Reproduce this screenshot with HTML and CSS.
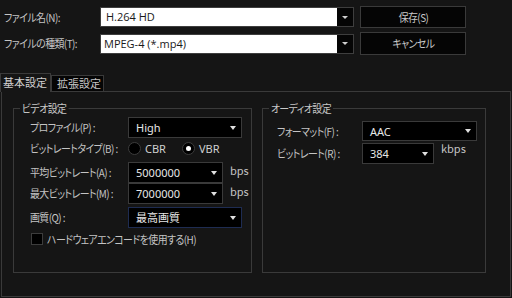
FILE: index.html
```html
<!DOCTYPE html>
<html lang="ja">
<head>
<meta charset="utf-8">
<link rel="stylesheet" href="styles.css">
</head>
<body>
<div class="top">
  <div class="flabel cx">ファイル名(N):</div>
  <div class="combo"><span class="field">H.264 HD</span><span class="cbtn"><span class="arrow small"></span></span></div>
  <div class="btn"><span class="cx mid">保存(S)</span></div>
  <div class="flabel cx">ファイルの種類(T):</div>
  <div class="combo"><span class="field field2">MPEG-4 (*.mp4)</span><span class="cbtn"><span class="arrow small"></span></span></div>
  <div class="btn btn2"><span class="cx mid">キャンセル</span></div>
</div>

<div class="tabs">
  <div class="tab active">基本設定</div>
  <div class="tab">拡張設定</div>
</div>

<div class="panel">
  <div class="group video">
    <div class="gtitle cx">ビデオ設定</div>
    <div class="row r1">
      <div class="lbl cx">プロファイル(P) :</div>
      <div class="dd w114"><span class="val">High</span><span class="arrow"></span></div>
    </div>
    <div class="row r2">
      <div class="lbl cx">ビットレートタイプ(B) :</div>
      <div class="radio"><span class="circle"></span><span class="rtext">CBR</span></div>
      <div class="radio second"><span class="circle on"></span><span class="rtext">VBR</span></div>
    </div>
    <div class="row r3">
      <div class="lbl cx">平均ビットレート(A) :</div>
      <div class="dd w95"><span class="val">5000000</span><span class="arrow"></span></div>
      <div class="unit">bps</div>
    </div>
    <div class="row r4">
      <div class="lbl cx">最大ビットレート(M) :</div>
      <div class="dd w95"><span class="val">7000000</span><span class="arrow"></span></div>
      <div class="unit">bps</div>
    </div>
    <div class="row r5">
      <div class="lbl cx">画質(Q) :</div>
      <div class="dd w114 focus"><span class="val jp">最高画質</span><span class="arrow"></span></div>
    </div>
    <div class="row r6">
      <span class="check"></span><span class="ctext cx">ハードウェアエンコードを使用する(H)</span>
    </div>
  </div>

  <div class="group audio">
    <div class="gtitle cx">オーディオ設定</div>
    <div class="row a1">
      <div class="lbl alb cx">フォーマット(F) :</div>
      <div class="dd w115"><span class="val">AAC</span><span class="arrow"></span></div>
    </div>
    <div class="row a2">
      <div class="lbl alb cx">ビットレート(R) :</div>
      <div class="dd w72"><span class="val">384</span><span class="arrow"></span></div>
      <div class="unit kb">kbps</div>
    </div>
  </div>
</div>
</body>
</html>
```

FILE: styles.css
```css
html, body {
  margin: 0;
  padding: 0;
}
body {
  width: 512px;
  height: 298px;
  overflow: hidden;
  background: #151515;
  color: #c4c4c4;
  font-family: "Noto Sans CJK JP", "Noto Sans", sans-serif;
  font-size: 11px;
  font-feature-settings: "palt";
  line-height: 13px;
}

/* condensed Japanese UI text (Meiryo UI-like narrow kana) */
.cx {
  letter-spacing: -0.6px;
  transform: scaleX(0.9);
  transform-origin: left center;
}
.cx.mid {
  transform-origin: center center;
  display: inline-block;
}

.top {
  display: grid;
  grid-template-columns: 90px 254px 106px;
  grid-template-rows: 22px 23px;
  column-gap: 6px;
  row-gap: 4px;
  padding: 6px 0 0 4px;
  align-items: center;
}
.flabel {
  white-space: nowrap;
}
.combo {
  display: flex;
  height: 20px;
  box-sizing: border-box;
  border: 1px solid #3e3e3e;
}
.field {
  flex: 1;
  background: #ffffff;
  color: #1a1a1a;
  font-family: "Open Sans", "Noto Sans", sans-serif;
  font-size: 11px;
  line-height: 18px;
  padding-left: 5px;
}
.field2 {
  padding-left: 3px;
}
.cbtn {
  width: 16px;
  background: #050505;
  display: flex;
  align-items: center;
  justify-content: center;
}
.btn {
  height: 22px;
  box-sizing: border-box;
  border: 1px solid #3a3a3a;
  background: #050505;
  color: #c8c8c8;
  display: flex;
  align-items: center;
  justify-content: center;
}
.btn2 {
  height: 23px;
}

.arrow {
  width: 0;
  height: 0;
  border-left: 3.5px solid transparent;
  border-right: 3.5px solid transparent;
  border-top: 4px solid #e0e0e0;
}
.arrow.small {
  border-left-width: 3px;
  border-right-width: 3px;
  border-top-width: 3px;
  border-top-color: #cfcfcf;
}

.tabs {
  display: flex;
  align-items: flex-end;
  margin-top: 18px;
  height: 18px;
}
.tab {
  box-sizing: border-box;
  height: 16px;
  border: 1px solid #3a3a3a;
  border-bottom: none;
  background: #050505;
  color: #c4c4c4;
  padding: 1px 2px 0 5px;
  width: 53px;
  white-space: nowrap;
}
.tab.active {
  position: relative;
  z-index: 1;
  height: 19px;
  margin-bottom: -1px;
  width: 51px;
  background: #151515;
  padding: 2px 0 0 2px;
  color: #d0d0d0;
}

.panel {
  margin-left: 1px;
  width: 510px;
  height: 206px;
  box-sizing: border-box;
  border: 1px solid #3a3a3a;
  display: flex;
  align-items: flex-start;
  padding: 16px 0 0 11px;
  column-gap: 10px;
}
.group {
  box-sizing: border-box;
  border: 1px solid #3a3a3a;
  height: 165px;
}
.video {
  width: 239px;
  padding-left: 16px;
}
.audio {
  width: 224px;
  padding-left: 14px;
}
.gtitle {
  margin: -7px 0 0 -10px;
  padding: 0 2px;
  width: fit-content;
  background: #151515;
  color: #c8c8c8;
}
.audio .gtitle {
  margin-left: -8px;
}

.row {
  display: flex;
  align-items: center;
}
.lbl {
  width: 98px;
  flex: none;
  white-space: nowrap;
}
.alb {
  width: 85px;
}
.r1 { margin-top: 2px; height: 21px; }
.r2 { height: 21px; }
.r3 { margin-top: 3px; height: 21px; }
.r4 { margin-top: 0px; height: 21px; }
.r5 { margin-top: 3px; height: 21px; }
.r6 { margin-top: 4px; height: 14px; padding-left: 1px; }
.a1 { margin-top: 6px; height: 20px; }
.a2 { margin-top: 2px; height: 21px; }

.dd {
  box-sizing: border-box;
  height: 100%;
  background: #000000;
  border: 1px solid #3a3a3a;
  display: flex;
  align-items: center;
  justify-content: space-between;
  padding: 0 5px 0 7px;
  color: #e6e6e6;
}
.dd.focus {
  border-color: #1e2c52;
}
.w114 { width: 114px; }
.w95 { width: 95px; }
.w115 { width: 115px; }
.w72 { width: 72px; }
.val {
  font-family: "Noto Sans", "Noto Sans CJK JP", sans-serif;
}
.val.jp {
  font-family: "Noto Sans CJK JP", sans-serif;
}
.unit {
  margin-left: 7px;
  align-self: flex-start;
  margin-top: 2px;
  color: #c4c4c4;
}
.kb {
  margin-top: -1px;
}

.radio {
  display: flex;
  align-items: center;
  gap: 4px;
}
.radio.second {
  margin-left: 16px;
}
.circle {
  width: 13px;
  height: 13px;
  box-sizing: border-box;
  border-radius: 50%;
  border: 1px solid #3c3c3c;
  background: #000;
  display: flex;
  align-items: center;
  justify-content: center;
}
.circle.on::after {
  content: "";
  width: 5px;
  height: 5px;
  border-radius: 50%;
  background: #ffffff;
}
.rtext {
  font-family: "Noto Sans", sans-serif;
  color: #d0d0d0;
}
.check {
  width: 12px;
  height: 12px;
  box-sizing: border-box;
  border: 1px solid #3c3c3c;
  background: #000;
  margin-right: 4px;
}
.ctext {
  white-space: nowrap;
}
```
